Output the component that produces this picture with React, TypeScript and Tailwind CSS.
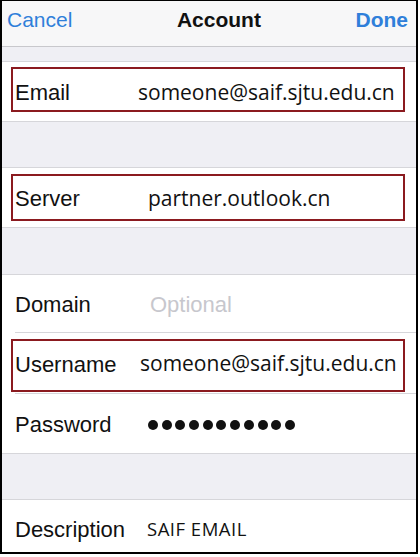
import React from "react";

const label = "font-['Liberation_Sans',Arial,sans-serif] text-[22px] text-[#111]";
const val = "font-['Open_Sans',sans-serif] text-[21px] text-[#111]";

export default function App() {
  return (
    <div className="w-[420px] h-[557px] bg-white">
      <div className="w-[418px] h-[554px] border-l-2 border-r-2 border-b-2 border-t border-black flex flex-col overflow-hidden bg-[#efeff4]">
        {/* nav */}
        <div className="h-[46px] shrink-0 bg-[#f7f7f8] border-b border-[#c8c8cc] flex items-start justify-between pl-[5px] pr-[8px] pt-[7px] font-['Liberation_Sans',Arial,sans-serif] text-[21px] leading-[24px]">
          <span className="text-[#2f7fda]">Cancel</span>
          <span className="font-bold text-[#111] ml-[10px]">Account</span>
          <span className="font-bold text-[#2f7fda]">Done</span>
        </div>
        <div className="h-[15px] shrink-0 border-b border-[#d6d6da]" />
        {/* Email */}
        <div className="relative h-[60px] shrink-0 bg-white border-b border-[#d6d6da] flex items-center pl-[13px] pt-[2px]">
          <span className={`${label} w-[123px] shrink-0`}>Email</span>
          <span className={`${val} whitespace-nowrap`}>someone@saif.sjtu.edu.cn</span>
          <div className="absolute left-[9px] top-[5px] w-[394px] h-[45px] border-2 border-[#8b1a1f]" />
        </div>
        <div className="h-[46px] shrink-0 border-b border-[#d6d6da]" />
        {/* Server */}
        <div className="relative h-[60px] shrink-0 bg-white border-b border-[#d6d6da] flex items-center pl-[13px] pt-[2px]">
          <span className={`${label} w-[133px] shrink-0`}>Server</span>
          <span className={`${val} whitespace-nowrap`}>partner.outlook.cn</span>
          <div className="absolute left-[9px] top-[6px] w-[394px] h-[47px] border-2 border-[#8b1a1f]" />
        </div>
        <div className="h-[47px] shrink-0 border-b border-[#d6d6da]" />
        {/* group */}
        <div className="shrink-0 bg-white pl-[13px]">
          <div className="h-[58px] border-b border-[#d6d6da] flex items-center pt-[2px]">
            <span className={`${label} w-[135px] shrink-0`}>Domain</span>
            <span className="font-['Liberation_Sans',Arial,sans-serif] text-[22px] text-[#c7c7cd]">Optional</span>
          </div>
          <div className="relative h-[61px] border-b border-[#d6d6da] flex items-center pt-[2px]">
            <span className={`${label} w-[125px] shrink-0`}>Username</span>
            <span className={`${val} whitespace-nowrap`}>someone@saif.sjtu.edu.cn</span>
            <div className="absolute left-[-4px] top-[6px] w-[394px] h-[53px] border-2 border-[#8b1a1f]" />
          </div>
          <div className="h-[59px] flex items-center pt-[2px]">
            <span className={`${label} w-[133px] shrink-0`}>Password</span>
            <div className="flex gap-[3.7px]">
              {Array.from({ length: 11 }).map((_, i) => (
                <span key={i} className="w-[10px] h-[10px] rounded-full bg-[#111]" />
              ))}
            </div>
          </div>
        </div>
        <div className="h-[47px] shrink-0 border-t border-b border-[#d6d6da]" />
        {/* Description */}
        <div className="flex-1 bg-white flex items-center pl-[13px] pt-[6px]">
          <span className={`${label} w-[132px] shrink-0`}>Description</span>
          <span className="font-['Open_Sans',sans-serif] text-[18.5px] tracking-[0.5px] text-[#111]">SAIF EMAIL</span>
        </div>
      </div>
    </div>
  );
}
